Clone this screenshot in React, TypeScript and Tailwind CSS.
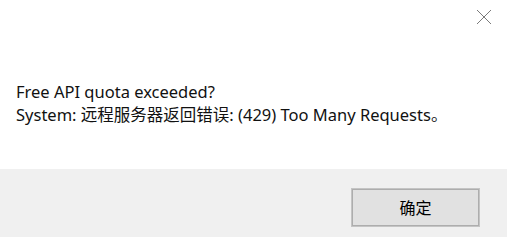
export default function App() {
  return (
    <div className="flex h-[237px] w-[507px] flex-col bg-white font-['Noto_Sans','Noto_Sans_CJK_SC',sans-serif] text-black">
      {/* Title bar */}
      <div className="flex h-[34px] justify-end pr-[15px] pt-[9px]">
        <svg width="16" height="16" viewBox="0 0 16 16" className="text-[#7a7a7a]">
          <path d="M1 1 L15 15 M15 1 L1 15" stroke="currentColor" strokeWidth="1" fill="none" />
        </svg>
      </div>

      {/* Message */}
      <div className="flex-1 pl-4 pt-[46px] text-[16.5px] leading-[23px] text-[#111]">
        <p>Free API quota exceeded?</p>
        <p>System: 远程服务器返回错误: (429) Too Many Requests。</p>
      </div>

      {/* Footer */}
      <div className="flex h-[68px] items-start justify-end bg-[#f0f0f0] pr-[27px] pt-[19px]">
        <button className="h-[39px] w-[129px] border-2 border-[#c4c4c4] bg-[#e1e1e1] text-[16px] outline outline-1 -outline-offset-2 outline-[#adadad]">
          确定
        </button>
      </div>
    </div>
  );
}
